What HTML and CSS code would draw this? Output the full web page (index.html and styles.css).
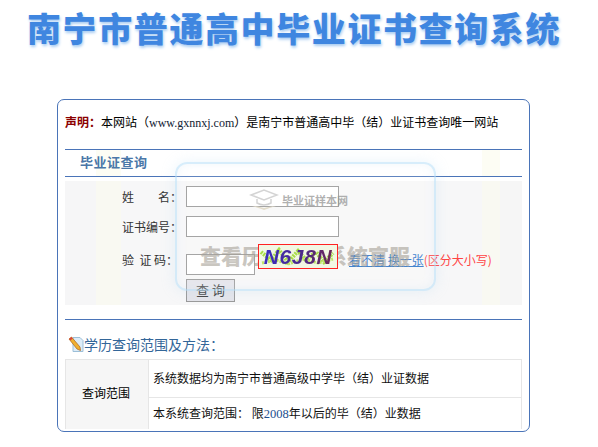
FILE: index.html
```html
<!DOCTYPE html>
<html lang="zh">
<head>
<meta charset="utf-8">
<title>南宁市普通高中毕业证书查询系统</title>
<link rel="stylesheet" href="styles.css">
</head>
<body>
<h1 class="title">南宁市普通高中毕业证书查询系统</h1>
<main class="card">
  <p class="notice"><b>声明：</b>本网站（<span class="serif">www.gxnnxj.com</span>）是南宁市普通高中毕（结）业证书查询唯一网站</p>
  <h2 class="tab">毕业证查询</h2>
  <form class="panel">
    <div class="row r1"><span class="label">姓<i class="sp"></i>名：</span><span class="input wide"></span></div>
    <div class="row r2"><span class="label">证书编号：</span><span class="input wide"></span></div>
    <div class="row r3"><span class="label up">验&nbsp;&nbsp;证 码：</span><span class="input short"></span>
      <span class="captcha"><svg width="78" height="23" viewBox="0 0 78 23"><path d="M2 7l10 8 8-10 9 12 10-11 8 9 10-8 8 10 9-9" fill="none" stroke="#a8dc48" stroke-width="4" stroke-dasharray="2 1"/><path d="M3 18l14-3 12 4 16-5 14 4 15-4" fill="none" stroke="#bfe668" stroke-width="3" stroke-dasharray="2 1"/></svg><em>N6J8N</em></span>
      <span class="links"><a href="#">看不清 换一张</a><span class="hint">(区分大小写)</span></span>
    </div>
    <div class="btnrow"><span class="btn">查 询</span></div>
  </form>
  <hr class="rule">
  <h3 class="method"><svg class="pencil" width="16" height="17" viewBox="0 0 16 17"><path d="M5 1.5h7l3 3v11H5z" fill="#dcecf8" stroke="#9dbfd8"/><path d="M1 3l2.500-2 8.500 10 .5 3.500-3.500-1.500z" fill="#f0b030" stroke="#a8611c" stroke-width=".7"/><path d="M1 3l2.500-2 1.300 1.500-2.500 2z" fill="#d8453a"/></svg>学历查询范围及方法：</h3>
  <div class="table">
    <div class="th">查询范围</div>
    <div class="tds">
      <div class="td">系统数据均为南宁市普通高级中学毕（结）业证数据</div>
      <div class="td">本系统查询范围：&nbsp;限<span class="serif">2008</span>年以后的毕（结）业数据</div>
    </div>
  </div>
</main>
<aside class="overlay">
  <div class="mark1"><svg width="30" height="24" viewBox="0 0 30 24"><path d="M2 7l13-5 13 5-13 5zM8 11v4c4 2.500 10 2.500 14 0v-4" fill="none" stroke="#d4d4d4" stroke-width="1.500"/><path d="M3 18c4 1 6 2 12 4 6-2 8-3 12-4-4 0-8 1-12 2-4-1-8-2-12-2z" fill="#e2dccb"/></svg>毕业证样本网</div>
  <div class="mark2">查看历届证书系统官服</div>
</aside>
</body>
</html>
```
FILE: styles.css
```css
* { box-sizing: border-box; }
html, body { margin: 0; padding: 0; }
body {
  position: relative;
  width: 598px;
  height: 447px;
  overflow: hidden;
  background: #fff;
  font: 12px/1 "Noto Sans CJK SC", "Liberation Sans", sans-serif;
  color: #000;
}
.title {
  margin: 0;
  height: 99px;
  padding: 8px 0 0 27px;
  font-size: 34px;
  line-height: 40px;
  font-weight: 900;
  letter-spacing: 1.6px;
  white-space: nowrap;
  color: #3f86e0;
  text-shadow: 1px 2px 3px #a9cdf2;
}
.card {
  width: 473px;
  height: 333px;
  margin-left: 57px;
  padding: 0 7px;
  border: 1px solid #4a74b8;
  border-radius: 7px;
  overflow: hidden;
}
.notice { margin: 0; height: 49px; padding-top: 15px; line-height: 14px; white-space: nowrap; }
.notice b { color: #8b0000; font-weight: 700; }
.serif { font-family: "Liberation Serif", serif; }
.notice .serif { font-size: 12px; color: #123; }
.tab {
  margin: 0;
  height: 28px;
  padding-left: 15px;
  border-top: 1px solid #4a74b8;
  border-bottom: 1px solid #4a74b8;
  background: linear-gradient(90deg, #fff 31px, #fdfdf4 31px, #fdfdf4 56px, #fff 56px, #fff 417px, #fdfdf4 417px, #fdfdf4 435px, #fff 435px);
  font-size: 13px;
  line-height: 23px;
  font-weight: 700;
  letter-spacing: .5px;
  color: #4a77a8;
}
.panel {
  margin-top: 4px;
  height: 124px;
  padding-top: 5px;
  background: linear-gradient(90deg, #f6f6f7 0, #f6f6f7 31px, #f9f9f2 31px, #f9f9f2 56px, #f7f7f8 56px, #f7f7f8 417px, #f9f9f2 417px, #f9f9f2 435px, #f6f6f6 435px);
}
.row { display: flex; align-items: center; padding-left: 57px; height: 21px; color: #333; }
.r2 { margin-top: 9px; }
.r3 { position: relative; margin-top: 17px; }
.label { width: 64px; font-weight: 400; white-space: nowrap; }
.up { margin-top: -9px; }
.sp { display: inline-block; width: 24px; }
.input { display: block; height: 21px; background: #fff; border: 1px solid #999; }
.wide { width: 153px; }
.short { width: 69px; }
.captcha {
  position: relative;
  z-index: 3;
  display: flex;
  align-items: center;
  justify-content: center;
  align-self: flex-start;
  width: 80px;
  height: 25px;
  margin: -10px 0 0 3px;
  border: 1px solid #f22;
  background: #f2f7e4;
}
.captcha svg { position: absolute; left: 0; top: 0; }
.captcha em {
  position: relative;
  font: italic 700 21px/1 "Liberation Sans", sans-serif;
  letter-spacing: .6px;
  background: linear-gradient(90deg, #3b2cc0, #4a2a90 50%, #6a2658);
  -webkit-background-clip: text;
  background-clip: text;
  color: transparent;
}
.links { margin: -10px 0 0 11px; white-space: nowrap; }
.links a { color: #2a73c8; }
.hint { color: #f44; }
.btnrow { padding-left: 121px; margin-top: 4px; }
.btn {
  display: block;
  width: 49px;
  height: 23px;
  border: 1px solid #999;
  background: #e4e4ea;
  color: #444;
  text-align: center;
  line-height: 19px;
  font-size: 13px;
}
.rule { margin: 14px 0 0; height: 1px; border: 0; background: #4a74b8; }
.method {
  display: flex;
  align-items: center;
  margin: 12px 0 3px 3px;
  height: 24px;
  font-size: 14px;
  font-weight: 400;
  color: #336699;
  white-space: nowrap;
}
.pencil { flex: none; }
.table { display: flex; height: 70px; border: 1px solid #e6e6e6; border-bottom: 0; }
.th {
  width: 83px;
  flex: none;
  padding-top: 26px;
  padding-left: 16px;
  line-height: 14px;
  background: #f6f6f6;
  border-right: 1px solid #e6e6e6;
}
.tds { flex: 1; }
.td { height: 37px; padding: 11px 0 0 4px; line-height: 14px; white-space: nowrap; color: #111; }
.td + .td { border-top: 1px solid #e6e6e6; height: 33px; padding-top: 8px; }
.td .serif { color: #1d4f8f; font-size: 12.5px; }
.overlay {
  position: absolute;
  z-index: 2;
  left: 175px;
  top: 162px;
  width: 261px;
  height: 129px;
  border: 2px solid rgba(175, 220, 248, .5);
  border-radius: 12px;
  background: rgba(255, 255, 255, .12);
  box-shadow: 0 0 14px rgba(175, 215, 245, .25), inset 0 0 10px rgba(200, 225, 245, .25);
  pointer-events: none;
}
.mark1 {
  display: flex;
  align-items: center;
  gap: 3px;
  margin: 24px 0 0 72px;
  font-size: 11px;
  font-weight: 700;
  color: rgba(150, 150, 150, .75);
  white-space: nowrap;
}
.mark2 {
  margin: 31px 0 0 23px;
  font-size: 21px;
  line-height: 24px;
  font-weight: 900;
  color: rgba(165, 160, 150, .6);
  white-space: nowrap;
}
```
